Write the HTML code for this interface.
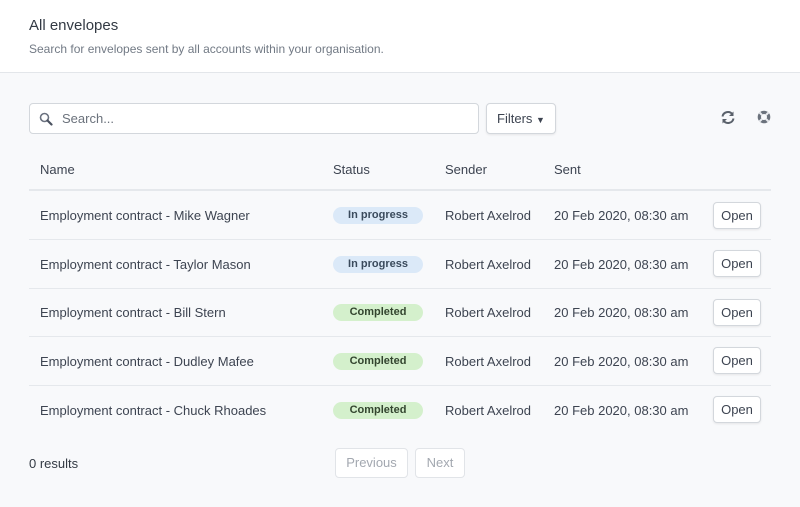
<!DOCTYPE html>
<html><head><style>
*{margin:0;padding:0;box-sizing:border-box}
body{width:800px;height:507px;background:#f8f9fb;font-family:"Liberation Sans",sans-serif;color:#3d4451;position:relative;overflow:hidden;font-size:13px}
.hdr{position:absolute;left:0;top:0;width:800px;height:73px;background:#fff;border-bottom:1px solid #e3e6ea}
.a{position:absolute;white-space:nowrap}
.search{left:29px;top:103px;width:450px;height:31px;background:#fff;border:1px solid #d3d7dc;border-radius:4px}
.btn{background:#fff;border:1px solid #d3d7dc;border-radius:4px;box-shadow:0 1px 2px rgba(0,0,0,.08);text-align:center}
.line{position:absolute;left:29px;width:742px;height:1px;background:#e5e8ec}
.pill{position:absolute;left:333px;width:90px;height:17px;border-radius:9px;font-size:11px;font-weight:bold;text-align:center;line-height:17px}
.ip{background:#dbe9f8;color:#3a4a5c}
.cp{background:#d4f0cc;color:#33452f}
</style></head><body>
<div class="hdr"></div>
<div class="a" style="left:29px;top:17px;font-size:15px;color:#333a44">All envelopes</div>
<div class="a" style="left:29px;top:42px;font-size:12px;color:#727a85">Search for envelopes sent by all accounts within your organisation.</div>
<div class="a search"></div>
<svg class="a" style="left:39px;top:112px" width="14" height="14" viewBox="0 0 14 14"><circle cx="5.5" cy="5.5" r="4" fill="none" stroke="#6b7280" stroke-width="1.6"/><path d="M8.5 8.5L12.5 12.5" stroke="#4b5260" stroke-width="2.2" stroke-linecap="round"/></svg>
<div class="a" style="left:62px;top:111px;color:#6b727c">Search...</div>
<div class="a btn" style="left:486px;top:103px;width:70px;height:31px;line-height:29px;font-size:13px;color:#3d4451">Filters <span style="font-size:9px">▼</span></div>
<svg class="a" style="left:720px;top:110px" width="16" height="15" viewBox="0 0 16 15"><path d="M2.5 6.5A5.5 5.5 0 0 1 12.5 4.5" fill="none" stroke="#5a616b" stroke-width="2"/><path d="M13.5 1.5V6H9" fill="#5a616b"/><path d="M13.5 8.5A5.5 5.5 0 0 1 3.5 10.5" fill="none" stroke="#5a616b" stroke-width="2"/><path d="M2.5 13.5V9H7" fill="#5a616b"/></svg>
<svg class="a" style="left:757px;top:110px" width="14" height="14" viewBox="0 0 14 14"><circle cx="7" cy="7" r="6.3" fill="#6b727c"/><circle cx="7" cy="7" r="3" fill="#f8f9fb"/><path d="M2.5 2.5L5 5M11.5 2.5L9 5M2.5 11.5L5 9M11.5 11.5L9 9" stroke="#e8eaee" stroke-width="2"/></svg>
<div class="a" style="left:40px;top:162px">Name</div>
<div class="a" style="left:333px;top:162px">Status</div>
<div class="a" style="left:445px;top:162px">Sender</div>
<div class="a" style="left:554px;top:162px">Sent</div>
<div class="line" style="top:189px;height:2px"></div>
<div class="line" style="top:239px"></div>
<div class="line" style="top:288px"></div>
<div class="line" style="top:336px"></div>
<div class="line" style="top:385px"></div>

<div class="a" style="left:40px;top:208px">Employment contract - Mike Wagner</div>
<div class="pill ip" style="top:207px">In progress</div>
<div class="a" style="left:445px;top:208px">Robert Axelrod</div>
<div class="a" style="left:554px;top:208px">20 Feb 2020, 08:30 am</div>
<div class="a btn" style="left:713px;top:202px;width:48px;height:27px;line-height:25px">Open</div>

<div class="a" style="left:40px;top:257px">Employment contract - Taylor Mason</div>
<div class="pill ip" style="top:256px">In progress</div>
<div class="a" style="left:445px;top:257px">Robert Axelrod</div>
<div class="a" style="left:554px;top:257px">20 Feb 2020, 08:30 am</div>
<div class="a btn" style="left:713px;top:250px;width:48px;height:27px;line-height:25px">Open</div>

<div class="a" style="left:40px;top:305px">Employment contract - Bill Stern</div>
<div class="pill cp" style="top:304px">Completed</div>
<div class="a" style="left:445px;top:305px">Robert Axelrod</div>
<div class="a" style="left:554px;top:305px">20 Feb 2020, 08:30 am</div>
<div class="a btn" style="left:713px;top:299px;width:48px;height:27px;line-height:25px">Open</div>

<div class="a" style="left:40px;top:354px">Employment contract - Dudley Mafee</div>
<div class="pill cp" style="top:353px">Completed</div>
<div class="a" style="left:445px;top:354px">Robert Axelrod</div>
<div class="a" style="left:554px;top:354px">20 Feb 2020, 08:30 am</div>
<div class="a btn" style="left:713px;top:347px;width:48px;height:27px;line-height:25px">Open</div>

<div class="a" style="left:40px;top:403px">Employment contract - Chuck Rhoades</div>
<div class="pill cp" style="top:402px">Completed</div>
<div class="a" style="left:445px;top:403px">Robert Axelrod</div>
<div class="a" style="left:554px;top:403px">20 Feb 2020, 08:30 am</div>
<div class="a btn" style="left:713px;top:396px;width:48px;height:27px;line-height:25px">Open</div>

<div class="a" style="left:29px;top:456px;color:#333a44">0 results</div>
<div class="a btn" style="left:335px;top:448px;width:73px;height:30px;line-height:28px;color:#a3a8b0;box-shadow:none;border-color:#e1e4e8">Previous</div>
<div class="a btn" style="left:415px;top:448px;width:50px;height:30px;line-height:28px;color:#a3a8b0;box-shadow:none;border-color:#e1e4e8">Next</div>
</body></html>
